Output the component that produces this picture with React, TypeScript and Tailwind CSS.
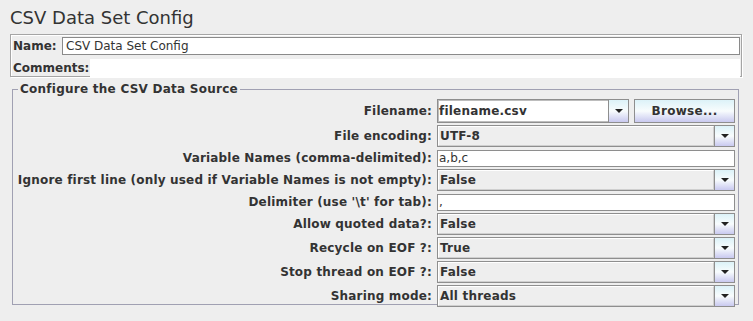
import React from "react";

const font = { fontFamily: '"DejaVu Sans", "Liberation Sans", sans-serif' };

function Arrow() {
  return (
    <div className="w-[20px] h-full flex items-center justify-center border-l border-[#8e8e8e] bg-gradient-to-b from-[#dcf2f8] via-[#f8fcfd] to-[#c9c9ef]">
      <svg width="10" height="6" viewBox="0 0 10 6">
        <path d="M1 1h8l-4 4z" fill="#222" />
      </svg>
    </div>
  );
}

function Combo({ value }: { value: string }) {
  return (
    <div className="h-[22px] w-[298px] flex border border-[#8e8e8e] bg-[#eeeeee]">
      <div className="flex-1 flex items-center pl-[1px] text-[12px] font-bold tracking-[0.2px] text-[#333] border border-white border-r-[#cfcfcf] border-b-[#cfcfcf]">
        {value}
      </div>
      <Arrow />
    </div>
  );
}

function TextField({ value }: { value: string }) {
  return (
    <div className="h-[17px] w-[298px] flex items-center pl-[1px] bg-white border border-[#8e8e8e] text-[12px] text-[#333]">
      {value}
    </div>
  );
}

function Row({ label, children, tall }: { label: string; children: React.ReactNode; tall?: boolean }) {
  return (
    <div className={`flex items-center ${tall ? "h-[24px]" : ""}`}>
      <div className="w-[424px] pr-[5px] text-right text-[12px] font-bold tracking-[0.18px] text-[#333] whitespace-nowrap">{label}</div>
      {children}
    </div>
  );
}

export default function App() {
  return (
    <div className="w-[753px] h-[321px] bg-[#eeeeee] overflow-hidden" style={font}>
      <div className="pl-[10px] pt-[7px] h-[34px] text-[18px] text-[#333] leading-[22px]">CSV Data Set Config</div>

      <div className="ml-[10px] w-[732px] h-[43px] border border-[#a5a5a5] shadow-[inset_1px_1px_0_#ffffff,1px_1px_0_#ffffff] pl-[1px] pr-[1px] pt-[1px]">
        <div className="flex items-center h-[19px]">
          <span className="text-[12px] font-bold text-[#333] w-[50px] pl-[1px]">Name:</span>
          <div className="flex-1 h-[18px] bg-white border border-[#8a8a8a] flex items-center pl-[3px] text-[12px] text-[#333]">
            CSV Data Set Config
          </div>
        </div>
        <div className="flex items-center h-[19px] mt-[3px]">
          <span className="text-[12px] font-bold text-[#333] w-[78px] pl-[1px]">Comments:</span>
          <div className="flex-1 h-[18px] bg-white" />
        </div>
      </div>

      <fieldset className="ml-[12px] mt-[4px] w-[727px] h-[224px] border border-[#a0a0b2] px-0 pt-0 pb-0 m-0">
        <legend className="ml-[5px] px-[2px] text-[12px] font-bold tracking-[0.25px] text-[#333] leading-[16px]">Configure the CSV Data Source</legend>
        <div className="flex flex-col gap-[2px] pt-[2px]">
          <Row label="Filename:" tall>
            <div className="flex gap-[5px] items-center">
              <div className="h-[24px] w-[192px] flex border border-[#8e8e8e] bg-white">
                <div className="flex-1 flex items-center pl-[0px] text-[12px] font-bold tracking-[0.2px] text-[#333] border border-[#bdbdbd] border-r-0">
                  filename.csv
                </div>
                <Arrow />
              </div>
              <div className="h-[24px] w-[101px] border border-[#8e8e8e] flex items-center justify-center text-[12px] font-bold tracking-[0.3px] text-[#333] bg-gradient-to-b from-[#dcf2f8] via-[#f8fcfd] to-[#c9c9ef]">
                Browse...
              </div>
            </div>
          </Row>
          <Row label="File encoding:">
            <Combo value="UTF-8" />
          </Row>
          <Row label="Variable Names (comma-delimited):">
            <TextField value="a,b,c" />
          </Row>
          <Row label="Ignore first line (only used if Variable Names is not empty):">
            <Combo value="False" />
          </Row>
          <Row label="Delimiter (use '\t' for tab):">
            <TextField value="," />
          </Row>
          <Row label="Allow quoted data?:">
            <Combo value="False" />
          </Row>
          <Row label="Recycle on EOF ?:">
            <Combo value="True" />
          </Row>
          <Row label="Stop thread on EOF ?:">
            <Combo value="False" />
          </Row>
          <Row label="Sharing mode:">
            <Combo value="All threads" />
          </Row>
        </div>
      </fieldset>
    </div>
  );
}
